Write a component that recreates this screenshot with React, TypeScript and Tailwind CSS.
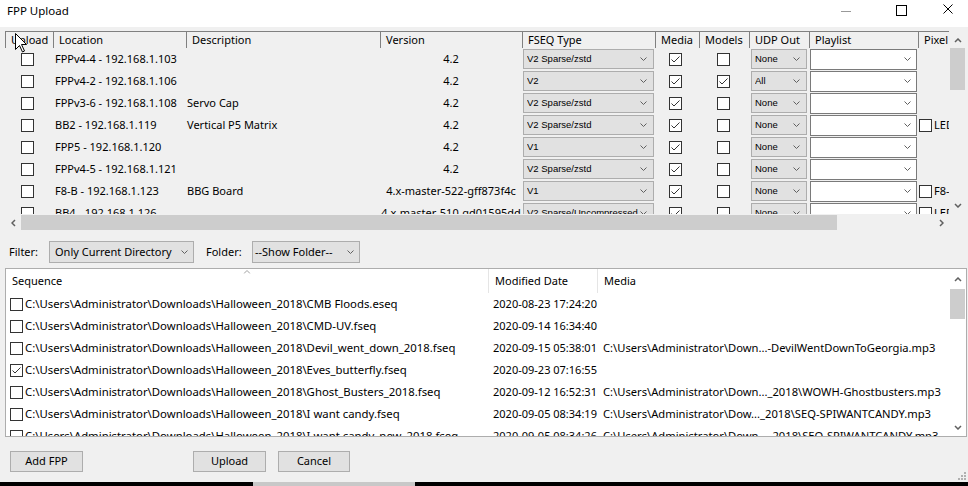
import React from "react";

type TopRow = {
  loc: string;
  desc: string;
  ver: string;
  fseq: string;
  media: boolean;
  models: boolean;
  udp: string;
  pixel?: string;
};

const topRows: TopRow[] = [
  { loc: "FPPv4-4 - 192.168.1.103", desc: "", ver: "4.2", fseq: "V2 Sparse/zstd", media: true, models: false, udp: "None" },
  { loc: "FPPv4-2 - 192.168.1.106", desc: "", ver: "4.2", fseq: "V2", media: true, models: true, udp: "All" },
  { loc: "FPPv3-6 - 192.168.1.108", desc: "Servo Cap", ver: "4.2", fseq: "V2 Sparse/zstd", media: true, models: false, udp: "None" },
  { loc: "BB2 - 192.168.1.119", desc: "Vertical P5 Matrix", ver: "4.2", fseq: "V2 Sparse/zstd", media: true, models: false, udp: "None", pixel: "LED Panels" },
  { loc: "FPP5 - 192.168.1.120", desc: "", ver: "4.2", fseq: "V1", media: true, models: false, udp: "None" },
  { loc: "FPPv4-5 - 192.168.1.121", desc: "", ver: "4.2", fseq: "V2 Sparse/zstd", media: true, models: false, udp: "None" },
  { loc: "F8-B - 192.168.1.123", desc: "BBG Board", ver: "4.x-master-522-gff873f4c", fseq: "V1", media: true, models: false, udp: "None", pixel: "F8-B" },
  { loc: "BB4 - 192.168.1.126", desc: "", ver: "4.x-master-510-gd01595dd", fseq: "V2 Sparse/Uncompressed", media: true, models: false, udp: "None", pixel: "LED Panels" },
];

const base = "C:\\Users\\Administrator\\Downloads\\Halloween_2018\\";

const seqRows = [
  { name: base + "CMB Floods.eseq", date: "2020-08-23 17:24:20", media: "", on: false },
  { name: base + "CMD-UV.fseq", date: "2020-09-14 16:34:40", media: "", on: false },
  { name: base + "Devil_went_down_2018.fseq", date: "2020-09-15 05:38:01", media: "C:\\Users\\Administrator\\Down...-DevilWentDownToGeorgia.mp3", on: false },
  { name: base + "Eves_butterfly.fseq", date: "2020-09-23 07:16:55", media: "", on: true },
  { name: base + "Ghost_Busters_2018.fseq", date: "2020-09-12 16:52:31", media: "C:\\Users\\Administrator\\Down..._2018\\WOWH-Ghostbusters.mp3", on: false },
  { name: base + "I want candy.fseq", date: "2020-09-05 08:34:19", media: "C:\\Users\\Administrator\\Dow..._2018\\SEQ-SPIWANTCANDY.mp3", on: false },
  { name: base + "I want candy_new_2018.fseq", date: "2020-09-05 08:34:26", media: "C:\\Users\\Administrator\\Down..._2018\\SEQ-SPIWANTCANDY.mp3", on: false },
];

function Check({ on }: { on?: boolean }) {
  return (
    <span className="w-[13px] h-[13px] border border-[#333333] bg-white flex items-center justify-center shrink-0">
      {on && (
        <svg width="11" height="11" viewBox="0 0 11 11">
          <path d="M1.5 5.5 L4 8 L9.5 2.5" fill="none" stroke="#333333" strokeWidth="1" />
        </svg>
      )}
    </span>
  );
}

function Chev({ dir = "down", color = "#606060" }: { dir?: "down" | "up"; color?: string }) {
  const d = dir === "down" ? "M0.5 0.5 L3.5 3.5 L6.5 0.5" : "M0.5 3.5 L3.5 0.5 L6.5 3.5";
  return (
    <svg width="7" height="4" viewBox="0 0 7 4" className="shrink-0">
      <path d={d} fill="none" stroke={color} strokeWidth="1" />
    </svg>
  );
}

function ScrollArrow({ dir }: { dir: "down" | "up" | "left" | "right" }) {
  const d =
    dir === "down" ? "M1 1 L4 4 L7 1" :
    dir === "up" ? "M1 4 L4 1 L7 4" :
    dir === "left" ? "M4 1 L1 4 L4 7" :
    "M1 1 L4 4 L1 7";
  const vert = dir === "down" || dir === "up";
  return (
    <svg width={vert ? 8 : 5} height={vert ? 5 : 8} viewBox={vert ? "0 0 8 5" : "0 0 5 8"}>
      <path d={d} fill="none" stroke="#606060" strokeWidth="1.5" />
    </svg>
  );
}

function GridSelect({ text }: { text: string }) {
  return (
    <div className="h-[20px] w-full bg-[#e1e1e1] border border-[#adadad] flex items-center pl-[3px] pr-[6px] overflow-hidden">
      <span className="flex-1 whitespace-nowrap overflow-hidden font-['Liberation_Sans',sans-serif] text-[9.5px] leading-[18px]">{text}</span>
      <Chev />
    </div>
  );
}

const cols = "grid grid-cols-[48px_133px_194px_142px_133px_44px_50px_60px_109px_31px]";

const headers = ["Upload", "Location", "Description", "Version", "FSEQ Type", "Media", "Models", "UDP Out", "Playlist", "Pixel"];

export default function App() {
  return (
    <div className="w-[968px] h-[486px] overflow-hidden bg-black flex flex-col font-['Noto_Sans',sans-serif] text-[11px] text-black">
      <div className="h-[482px] shrink-0 bg-[#f0f0f0] flex flex-col relative">
        {/* title bar */}
        <div className="h-[27px] shrink-0 bg-white flex items-start pl-[7px] pt-[2px]">
          <span className="leading-[18px] text-[11.5px]">FPP Upload</span>
          <div className="ml-auto flex items-start pr-[15px]">
            <div className="w-[10px] h-px bg-[#999999] mt-[9px]" />
            <div className="w-[11px] h-[11px] border border-black ml-[45px] mt-[3px]" />
            <svg width="10" height="10" viewBox="0 0 10 10" className="ml-[36px] mt-[2px]">
              <path d="M0.5 0.5 L9.5 9.5 M9.5 0.5 L0.5 9.5" stroke="#000" strokeWidth="1" />
            </svg>
          </div>
        </div>

        {/* top grid */}
        <div className="mt-[4px] ml-[5px] w-[961px] h-[200px] shrink-0 flex">
          <div className="w-[944px] flex flex-col">
            <div className="h-[183px] overflow-hidden">
              <div className={`${cols} h-[17px] border-t border-l border-[#808080]`}>
                {headers.map(h => (
                  <div key={h} className="border-r border-[#808080] pl-[5px] leading-[16px] whitespace-nowrap overflow-hidden">{h}</div>
                ))}
              </div>
              {topRows.map((r, i) => (
                <div key={i} className={`${cols} h-[22px] leading-[22px] whitespace-nowrap`}>
                  <div className="flex items-center pl-[16px]"><Check /></div>
                  <div className="pl-[2px] overflow-hidden">{r.loc}</div>
                  <div className="pl-[1px] overflow-hidden">{r.desc}</div>
                  <div className="text-center overflow-hidden">{r.ver}</div>
                  <div className="flex items-center px-[1px]"><GridSelect text={r.fseq} /></div>
                  <div className="flex items-center pl-[14px]"><Check on={r.media} /></div>
                  <div className="flex items-center pl-[18px]"><Check on={r.models} /></div>
                  <div className="flex items-center px-[2px]"><GridSelect text={r.udp} /></div>
                  <div className="flex items-center px-[1px]">
                    <div className="h-[21px] w-full bg-white border border-[#7a7a7a] flex items-center justify-end pr-[5px]">
                      <Chev />
                    </div>
                  </div>
                  <div className="flex items-center pl-[1px] gap-[2px] overflow-hidden">
                    {r.pixel && (<><Check /><span>{r.pixel}</span></>)}
                  </div>
                </div>
              ))}
            </div>
            {/* horizontal scrollbar */}
            <div className="h-[17px] flex items-center">
              <div className="w-[16px] flex justify-center"><ScrollArrow dir="left" /></div>
              <div className="flex-1 h-full flex items-center">
                <div className="w-[816px] h-[15px] bg-[#cdcdcd]" />
              </div>
              <div className="w-[16px] flex justify-center"><ScrollArrow dir="right" /></div>
            </div>
          </div>
          {/* vertical scrollbar */}
          <div className="w-[17px] flex flex-col">
            <div className="h-[183px] flex flex-col items-center">
              <div className="h-[17px] flex items-center justify-center pt-[2px]"><ScrollArrow dir="up" /></div>
              <div className="w-[15px] h-[42px] bg-[#cdcdcd]" />
              <div className="flex-1" />
              <div className="h-[17px] flex items-center justify-center"><ScrollArrow dir="down" /></div>
            </div>
          </div>
        </div>

        {/* filter row */}
        <div className="mt-[10px] h-[22px] shrink-0 flex items-center pl-[9px]">
          <span className="w-[40px]">Filter:</span>
          <div className="w-[145px] h-[22px] bg-[#e1e1e1] border border-[#adadad] flex items-center pl-[5px] pr-[5px]">
            <span className="flex-1">Only Current Directory</span>
            <Chev />
          </div>
          <span className="ml-[12px] w-[46px]">Folder:</span>
          <div className="w-[108px] h-[22px] bg-[#e1e1e1] border border-[#adadad] flex items-center pl-[2px] pr-[5px]">
            <span className="flex-1">--Show Folder--</span>
            <Chev />
          </div>
        </div>

        {/* sequence list */}
        <div className="mt-[5px] ml-[5px] w-[962px] h-[169px] shrink-0 border border-[#adadad] bg-white flex">
          <div className="w-[943px] overflow-hidden">
            <div className="grid grid-cols-[483px_109px_351px] h-[24px] leading-[24px]">
              <div className="relative pl-[6px] border-r border-[#e5e5e5]">
                Sequence
                <span className="absolute left-1/2 top-[1px] -translate-x-1/2"><Chev dir="up" color="#a0a0a0" /></span>
              </div>
              <div className="pl-[6px] border-r border-[#e5e5e5]">Modified Date</div>
              <div className="pl-[6px]">Media</div>
            </div>
            {seqRows.map((r, i) => (
              <div key={i} className="grid grid-cols-[483px_109px_351px] h-[22px] leading-[22px] whitespace-nowrap">
                <div className="flex items-center pl-[4px] gap-[2px] overflow-hidden">
                  <Check on={r.on} />
                  <span className="text-[11.35px]">{r.name}</span>
                </div>
                <div className="pl-[4px] overflow-hidden">{r.date}</div>
                <div className="pl-[5px] overflow-hidden text-[11.2px]">{r.media}</div>
              </div>
            ))}
          </div>
          <div className="w-[17px] flex flex-col items-center">
            <div className="h-[20px] flex items-center justify-center"><ScrollArrow dir="up" /></div>
            <div className="w-[15px] h-[30px] bg-[#cdcdcd]" />
            <div className="flex-1" />
            <div className="h-[17px] flex items-center justify-center"><ScrollArrow dir="down" /></div>
          </div>
        </div>

        {/* buttons */}
        <div className="mt-[14px] h-[21px] shrink-0 flex pl-[10px]">
          <button className="w-[73px] h-[21px] bg-[#e1e1e1] border border-[#adadad]">Add FPP</button>
          <button className="ml-[110px] w-[73px] h-[21px] bg-[#e1e1e1] border border-[#adadad]">Upload</button>
          <button className="ml-[12px] w-[72px] h-[21px] bg-[#e1e1e1] border border-[#adadad]">Cancel</button>
        </div>

        {/* resize grip */}
        <div className="absolute right-[2px] bottom-[2px] grid grid-cols-3 gap-[1px]">
          {[0, 0, 1, 0, 1, 1, 1, 1, 1].map((v, i) => (
            <span key={i} className={`w-[2px] h-[2px] ${v ? "bg-[#b0b0b0]" : ""}`} />
          ))}
        </div>

        {/* mouse cursor */}
        <svg width="13" height="20" viewBox="0 0 13 20" className="absolute left-[15px] top-[33px]">
          <path d="M0.5 0.5 L0.5 16.5 L4.5 12.5 L7.5 19 L9.5 18 L6.5 11.5 L11.5 11.5 Z" fill="#fff" stroke="#000" strokeWidth="1" />
        </svg>
      </div>
      <div className="flex-1 flex">
        <div className="w-[253px]" />
        <div className="w-[162px] bg-[#c8c8c8]" />
      </div>
    </div>
  );
}
